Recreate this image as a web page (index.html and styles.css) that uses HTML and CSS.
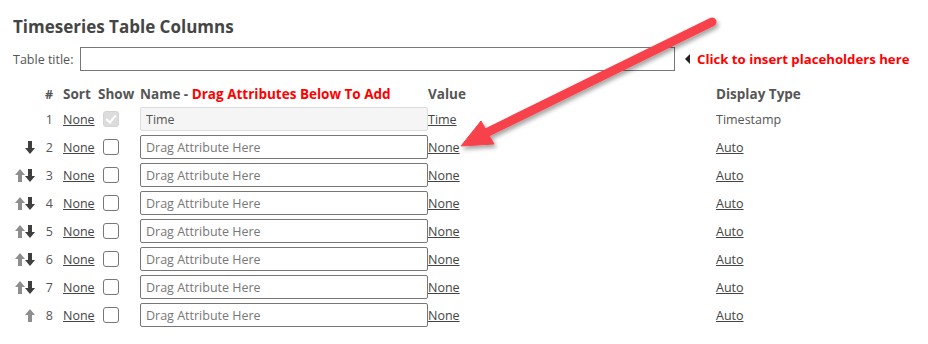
FILE: index.html
```html
<!DOCTYPE html>
<html lang="en">
<head>
  <meta charset="UTF-8" />
  <title>Timeseries Table Columns</title>
  <link rel="stylesheet" href="styles.css">
</head>
<body>
  <div class="panel">
    <h2 class="title">Timeseries Table Columns</h2>

    <div class="title-row">
      <label for="tableTitle">Table title:</label>
      <input type="text" id="tableTitle" class="title-input" />
      <span class="hint"><span class="hint-tri"></span>Click to insert placeholders here</span>
    </div>

    <div class="cols">
      <div class="row head">
        <span></span>
        <span class="num">#</span>
        <span>Sort</span>
        <span>Show</span>
        <span>Name - <em class="red">Drag Attributes Below To Add</em></span>
        <span>Value</span>
        <span>Display Type</span>
      </div>

      <div class="row">
        <span class="move"></span>
        <span class="num">1</span>
        <span><a href="#">None</a></span>
        <span><span class="check checked"></span></span>
        <span><input type="text" class="attr locked" value="Time" readonly /></span>
        <span><a href="#">Time</a></span>
        <span class="plain">Timestamp</span>
      </div>

      <div class="row">
        <span class="move"><i class="dn"></i></span>
        <span class="num">2</span>
        <span><a href="#">None</a></span>
        <span><span class="check"></span></span>
        <span><input type="text" class="attr" placeholder="Drag Attribute Here" /></span>
        <span><a href="#">None</a></span>
        <span><a href="#">Auto</a></span>
      </div>

      <div class="row">
        <span class="move"><i class="up"></i><i class="dn"></i></span>
        <span class="num">3</span>
        <span><a href="#">None</a></span>
        <span><span class="check"></span></span>
        <span><input type="text" class="attr" placeholder="Drag Attribute Here" /></span>
        <span><a href="#">None</a></span>
        <span><a href="#">Auto</a></span>
      </div>

      <div class="row">
        <span class="move"><i class="up"></i><i class="dn"></i></span>
        <span class="num">4</span>
        <span><a href="#">None</a></span>
        <span><span class="check"></span></span>
        <span><input type="text" class="attr" placeholder="Drag Attribute Here" /></span>
        <span><a href="#">None</a></span>
        <span><a href="#">Auto</a></span>
      </div>

      <div class="row">
        <span class="move"><i class="up"></i><i class="dn"></i></span>
        <span class="num">5</span>
        <span><a href="#">None</a></span>
        <span><span class="check"></span></span>
        <span><input type="text" class="attr" placeholder="Drag Attribute Here" /></span>
        <span><a href="#">None</a></span>
        <span><a href="#">Auto</a></span>
      </div>

      <div class="row">
        <span class="move"><i class="up"></i><i class="dn"></i></span>
        <span class="num">6</span>
        <span><a href="#">None</a></span>
        <span><span class="check"></span></span>
        <span><input type="text" class="attr" placeholder="Drag Attribute Here" /></span>
        <span><a href="#">None</a></span>
        <span><a href="#">Auto</a></span>
      </div>

      <div class="row">
        <span class="move"><i class="up"></i><i class="dn"></i></span>
        <span class="num">7</span>
        <span><a href="#">None</a></span>
        <span><span class="check"></span></span>
        <span><input type="text" class="attr" placeholder="Drag Attribute Here" /></span>
        <span><a href="#">None</a></span>
        <span><a href="#">Auto</a></span>
      </div>

      <div class="row">
        <span class="move"><i class="up"></i></span>
        <span class="num">8</span>
        <span><a href="#">None</a></span>
        <span><span class="check"></span></span>
        <span><input type="text" class="attr" placeholder="Drag Attribute Here" /></span>
        <span><a href="#">None</a></span>
        <span><a href="#">Auto</a></span>
      </div>
    </div>
  </div>

  <!-- annotation arrow drawn over the screenshot -->
  <svg class="callout" width="928" height="344" viewBox="0 0 928 344">
    <defs>
      <filter id="shade" x="-10%" y="-10%" width="120%" height="130%">
        <feDropShadow dx="2" dy="3" stdDeviation="2" flood-color="#000" flood-opacity="0.35"/>
      </filter>
    </defs>
    <g filter="url(#shade)" fill="#f8434b" stroke="#f8434b">
      <line x1="712" y1="22" x2="484" y2="134" stroke-width="9" stroke-linecap="round"/>
      <polygon points="461,146 481,121 494,144" stroke-width="1" stroke-linejoin="round"/>
    </g>
  </svg>
</body>
</html>
```

FILE: styles.css
```css
body {
  margin: 0;
  font-family: "Open Sans", "Noto Sans", Arial, sans-serif;
  font-size: 12.5px;
  color: #555;
  background: #fff;
}
.panel {
  padding: 16px 13px 0 13px;
}
.title {
  margin: 0;
  font-size: 17px;
  font-weight: bold;
  color: #454545;
  line-height: 22px;
}
.title-row {
  display: flex;
  align-items: center;
  margin-top: 9px;
  height: 24px;
}
.title-row label {
  width: 67px;
  white-space: nowrap;
}
.title-input {
  width: 595px;
  height: 24px;
  box-sizing: border-box;
  border: 1px solid #777;
  padding: 2px 5px;
  font: inherit;
}
.hint {
  display: flex;
  align-items: center;
  margin-left: 10px;
  color: #f00;
  font-weight: bold;
  font-size: 13.2px;
}
.hint-tri {
  width: 0;
  height: 0;
  border-top: 5px solid transparent;
  border-bottom: 5px solid transparent;
  border-right: 5px solid #222;
  margin-right: 7px;
}
.cols {
  margin-top: 12px;
}
.row {
  display: grid;
  grid-template-columns: 30px 20px 35px 42px 288px 288px 1fr;
  align-items: center;
  height: 28px;
}
.row.head {
  height: 22px;
  font-weight: bold;
  color: #555;
  font-size: 13.5px;
}
.row.head .num {
  font-size: 12.5px;
}
.red {
  color: #f00;
  font-style: normal;
}
.num {
  text-align: right;
  padding-right: 10px;
}
.row a {
  color: #444;
  text-decoration: underline;
}
.plain {
  color: #555;
}
.move {
  display: flex;
  justify-content: flex-end;
  padding-right: 8px;
  gap: 0;
}
.move i {
  display: block;
  width: 10px;
  height: 13px;
  position: relative;
}
.move i::before {
  content: "";
  position: absolute;
  left: 3px;
  width: 4px;
  height: 8px;
}
.move i::after {
  content: "";
  position: absolute;
  left: 0;
  width: 0;
  height: 0;
  border-left: 5px solid transparent;
  border-right: 5px solid transparent;
}
.move .dn::before {
  top: 0;
  background: #3f3f3f;
}
.move .dn::after {
  top: 7px;
  border-top: 6px solid #3f3f3f;
}
.move .up::before {
  top: 5px;
  background: #8e8e8e;
}
.move .up::after {
  top: 0;
  border-bottom: 6px solid #8e8e8e;
}
.check {
  display: block;
  width: 16px;
  height: 16px;
  box-sizing: border-box;
  border: 1px solid #777;
  border-radius: 3px;
  margin-left: 5px;
  background: #fff;
  position: relative;
}
.check.checked {
  background: #dcdcdc;
  border-color: #d4d4d4;
}
.check.checked::after {
  content: "";
  position: absolute;
  left: 4px;
  top: 1px;
  width: 4px;
  height: 8px;
  border: solid #fff;
  border-width: 0 2px 2px 0;
  transform: rotate(40deg);
}
.attr {
  display: block;
  width: 288px;
  height: 24px;
  box-sizing: border-box;
  border: 1px solid #777;
  border-radius: 2px;
  padding: 2px 5px;
  font: inherit;
  color: #555;
}
.attr::placeholder {
  color: #777;
}
.attr.locked {
  background: #f5f5f5;
  border-color: #ddd;
}
.callout {
  position: absolute;
  left: 0;
  top: 0;
  pointer-events: none;
}
```
